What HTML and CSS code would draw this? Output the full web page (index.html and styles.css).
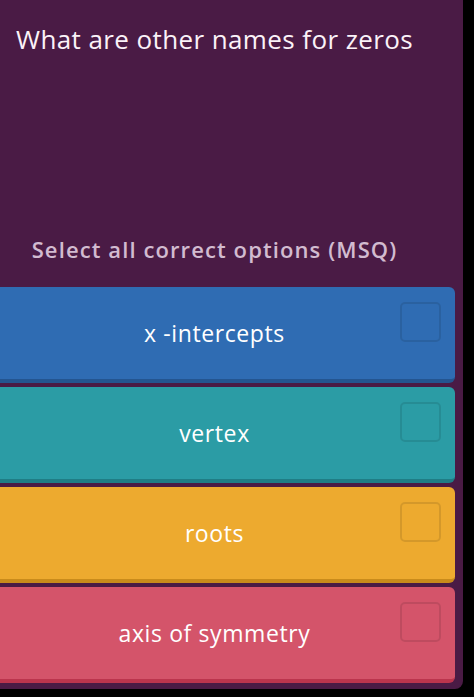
FILE: index.html
```html
<!DOCTYPE html>
<html lang="en">
<head>
    <meta charset="UTF-8">
    <meta name="viewport" content="width=device-width, initial-scale=1.0">
    <title>Quiz</title>
    <link rel="stylesheet" href="styles.css">
</head>
<body>
    <main class="screen">
        <div class="question">
            <p>What are other names for zeros</p>
        </div>

        <p class="hint">Select all correct options (MSQ)</p>

        <ul class="options">
            <li class="option blue">
                <span class="label">x -intercepts</span>
                <span class="check"></span>
            </li>
            <li class="option teal">
                <span class="label">vertex</span>
                <span class="check"></span>
            </li>
            <li class="option yellow">
                <span class="label">roots</span>
                <span class="check"></span>
            </li>
            <li class="option pink">
                <span class="label">axis of symmetry</span>
                <span class="check"></span>
            </li>
        </ul>
    </main>
</body>
</html>
```

FILE: styles.css
```css
body {
    margin: 0;
    padding: 0;
    background-color: #000000;
    font-family: 'Open Sans', 'Noto Sans', sans-serif;
}

.screen {
    width: 463px;
    height: 689px;
    background-color: #4a1b45;
    border-bottom-right-radius: 8px;
    overflow: hidden;
    display: flex;
    flex-direction: column;
}

.question {
    height: 236px;
    padding: 0 16px;
}

.question p {
    margin: 0;
    padding-top: 22px;
    color: #fbf2f8;
    font-size: 26px;
    letter-spacing: 0.4px;
    line-height: 34px;
}

.hint {
    margin: 0;
    width: 429px;
    text-align: center;
    color: #d2bbd0;
    font-size: 22px;
    font-weight: 600;
    letter-spacing: 1.1px;
    line-height: 26px;
}

.options {
    list-style: none;
    margin: 25px 0 0 0;
    padding: 0;
    display: flex;
    flex-direction: column;
    gap: 4px;
}

.option {
    position: relative;
    width: 455px;
    height: 92px;
    box-sizing: content-box;
    border-bottom: 4px solid;
    border-radius: 0 6px 6px 0;
    display: flex;
    align-items: center;
}

.label {
    width: 429px;
    text-align: center;
    color: #ffffff;
    font-size: 23px;
    letter-spacing: 0.6px;
}

.check {
    position: absolute;
    top: 15px;
    right: 14px;
    width: 37px;
    height: 36px;
    border: 2px solid rgba(0, 0, 0, 0.1);
    border-radius: 5px;
}

.blue {
    background-color: #2f6cb3;
    border-bottom-color: #245590;
}

.teal {
    background-color: #2b9ca5;
    border-bottom-color: #207d85;
}

.yellow {
    background-color: #edaa2f;
    border-bottom-color: #c98b1b;
}

.pink {
    background-color: #d4546a;
    border-bottom-color: #bb354d;
}
```
